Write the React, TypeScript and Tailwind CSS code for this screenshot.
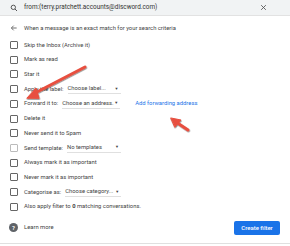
import React from 'react';

const Check: React.FC<{ faded?: boolean }> = ({ faded }) => (
  <span
    className={`block w-[8px] h-[8px] rounded-[1px] border ${faded ? 'border-[#bbb]' : 'border-[#666]'} shrink-0`}
  />
);

const Select: React.FC<{ label: string; width: string }> = ({ label, width }) => (
  <span className={`ml-[4px] flex items-center justify-between whitespace-nowrap border-b border-[#e0e0e0] h-[10px] ${width}`}>
    <span>{label}</span>
    <span className="text-[4px] mr-[2px] text-[#444]">▼</span>
  </span>
);

const Row: React.FC<{ children: React.ReactNode; faded?: boolean }> = ({ children, faded }) => (
  <div className="h-[14.73px] flex items-center whitespace-nowrap">
    <div className="w-[24px] pl-[10px] flex items-center">
      <Check faded={faded} />
    </div>
    <div className="flex items-center">{children}</div>
  </div>
);

export default function App() {
  return (
    <div
      className="relative w-[290px] h-[246px] bg-white text-[5.85px] text-[#444] overflow-hidden"
      style={{ fontFamily: 'Roboto, "Liberation Sans", sans-serif' }}
    >
      {/* search bar */}
      <div className="h-[16px] bg-[#f1f3f4] border-b border-[#e2e2e2] flex items-center">
        <div className="w-[24px] flex justify-center pl-[3px]">
          <svg width="8" height="8" viewBox="0 0 24 24" fill="none" stroke="#555" strokeWidth="3">
            <circle cx="10" cy="10" r="6.5" />
            <path d="M15 15l6 6" />
          </svg>
        </div>
        <span className="text-[6.4px] text-[#333]">from:(terry.pratchett.accounts@discword.com)</span>
        <div className="ml-auto mr-[23px]">
          <svg width="7" height="7" viewBox="0 0 24 24" stroke="#555" strokeWidth="3">
            <path d="M4 4l16 16M20 4L4 20" />
          </svg>
        </div>
      </div>

      {/* header */}
      <div className="mt-[5px] h-[14px] flex items-center">
        <div className="w-[24px] pl-[10px] flex items-center">
          <svg width="8" height="8" viewBox="0 0 24 24" fill="none" stroke="#555" strokeWidth="2.5">
            <path d="M20 12H5M11 5l-7 7 7 7" />
          </svg>
        </div>
        <span>When a message is an exact match for your search criteria</span>
      </div>

      {/* options */}
      <div className="mt-[2.6px]">
        <Row>Skip the Inbox (Archive it)</Row>
        <Row>Mark as read</Row>
        <Row>Star it</Row>
        <Row>
          <span>Apply the label:</span>
          <Select label="Choose label..." width="w-[53px]" />
        </Row>
        <Row>
          <span>Forward it to:</span>
          <Select label="Choose an address." width="w-[58px]" />
          <span className="ml-[15px] text-[#1a73e8]">Add forwarding address</span>
        </Row>
        <Row>Delete it</Row>
        <Row>Never send it to Spam</Row>
        <Row faded>
          <span>Send template:</span>
          <Select label="No templates" width="w-[54px]" />
        </Row>
        <Row>Always mark it as important</Row>
        <Row>Never mark it as important</Row>
        <Row>
          <span>Categorise as:</span>
          <Select label="Choose category..." width="w-[56px]" />
        </Row>
        <Row>
          <span>
            Also apply filter to <b className="font-bold">0</b> matching conversations.
          </span>
        </Row>
      </div>

      {/* footer */}
      <div className="mt-[6.6px] h-[14px] flex items-center">
        <div className="w-[24px] pl-[9px] flex items-center">
          <span className="w-[9px] h-[9px] rounded-full bg-[#5f6368] text-white text-[6px] font-bold flex items-center justify-center leading-none">
            ?
          </span>
        </div>
        <span>Learn more</span>
        <button className="ml-auto mr-[10px] w-[46px] h-[14px] rounded-[2px] bg-[#1a73e8] text-white text-[6px] font-medium">
          Create filter
        </button>
      </div>
      <div className="mt-[8px] border-t border-[#e0e0e0]" />

      {/* annotation arrows */}
      <svg className="absolute left-0 top-0" width="290" height="246" viewBox="0 0 290 246">
        <defs>
          <filter id="sh" x="-20%" y="-20%" width="140%" height="140%">
            <feDropShadow dx="0.5" dy="0.8" stdDeviation="0.6" floodColor="#000" floodOpacity="0.5" />
          </filter>
        </defs>
        <g filter="url(#sh)" fill="#e8503f" stroke="#e8503f" strokeLinecap="round" strokeLinejoin="round">
          <line x1="85" y1="67" x2="33" y2="94" strokeWidth="3" />
          <polygon points="27,98 36,88 39,98" strokeWidth="1" />
          <line x1="188" y1="130" x2="176" y2="122" strokeWidth="3" />
          <polygon points="171,118 181,120 175,127" strokeWidth="1" />
        </g>
      </svg>
    </div>
  );
}
